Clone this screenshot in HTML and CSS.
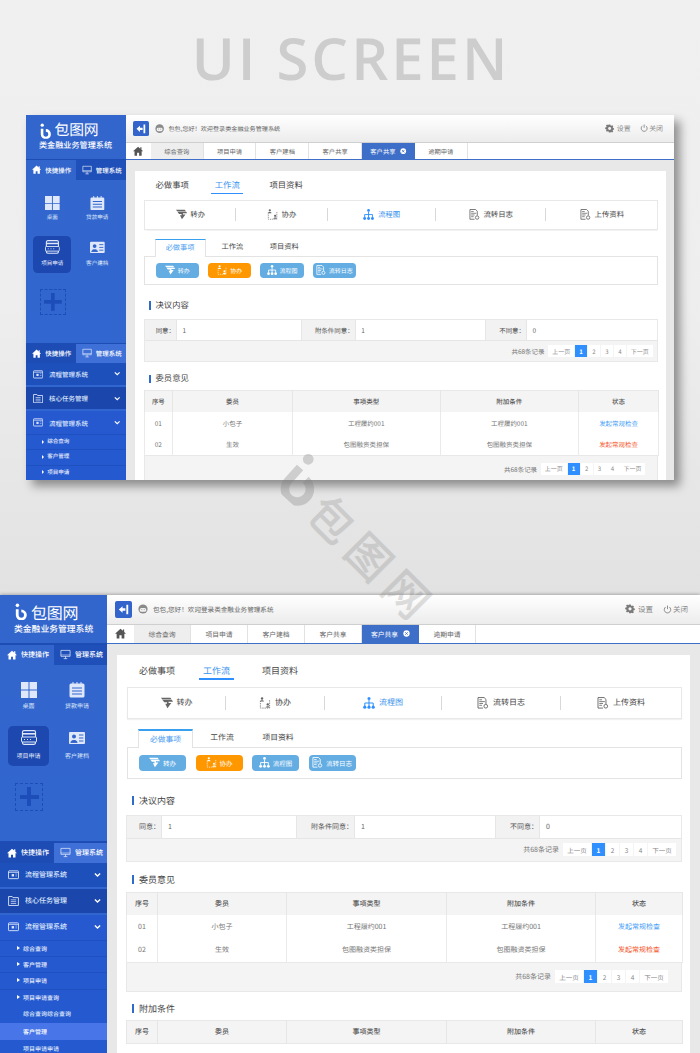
FILE: index.html
```html
<!DOCTYPE html>
<html lang="zh-CN">
<head>
<meta charset="utf-8">
<title>UI SCREEN</title>
<link rel="stylesheet" href="styles.css">
</head>
<body>
<svg class="sprite" aria-hidden="true">
  <symbol id="i-logo" viewBox="0 0 14 18"><circle cx="2.6" cy="2.4" r="1.9" fill="currentColor"/><path d="M2.4 6.5v6.3a4.4 4.4 0 1 0 4.4-4.4" fill="none" stroke="currentColor" stroke-width="3"/></symbol>
  <symbol id="i-home" viewBox="0 0 12 12"><path d="M6 .8 0 6.2h1.8V11.500h3V8h2.400v3.500h3V6.200H12L10 4.400V1.500H8.600v1.600z" fill="currentColor"/></symbol>
  <symbol id="i-monitor" viewBox="0 0 12 12"><path d="M1 1.500h10v6.500H1zM4 10.500h4M6 8v2.500" fill="none" stroke="currentColor" stroke-width=".8"/><path d="M1 6.500h10" stroke="currentColor" stroke-width=".6"/></symbol>
  <symbol id="i-grid" viewBox="0 0 16 16"><path d="M0 0h7.500v7.500H0zM8.500 0H16v7.500H8.500zM0 8.500h7.500V16H0zM8.500 8.500H16V16H8.500z" fill="currentColor"/></symbol>
  <symbol id="i-note" viewBox="0 0 16 16"><path d="M2 1.500h12a1.500 1.500 0 0 1 1.500 1.500v11a1.500 1.500 0 0 1-1.500 1.500H2A1.500 1.500 0 0 1 .5 14V3A1.500 1.500 0 0 1 2 1.500z" fill="currentColor"/><path d="M4 0v3M8 0v3M12 0v3" stroke="currentColor" stroke-width="1"/><path d="M3 6h10M3 9h10M3 12h10" stroke="#3264cb" stroke-width="1.100"/></symbol>
  <symbol id="i-app" viewBox="0 0 16 16"><rect x="1.500" y=".7" width="13" height="13.600" rx="1.500" fill="none" stroke="currentColor" stroke-width="1.200"/><path d="M1.500 3.800h13" stroke="currentColor" stroke-width="1.600"/><rect x=".5" y="7" width="15" height="5" rx="1" fill="#1c48b0" stroke="currentColor"/><path d="M3 9.500h1M6 9.500h1M9 9.500h1" stroke="currentColor"/></symbol>
  <symbol id="i-card" viewBox="0 0 16 12"><rect width="16" height="12" rx="1" fill="currentColor"/><circle cx="5" cy="4.600" r="2" fill="#3264cb"/><path d="M1.800 10.400c.3-2.600 6-2.600 6.400 0zM10 3h4.400M10 6h4.400M10 9h4.400" fill="#3264cb" stroke="#3264cb"/></symbol>
  <symbol id="i-screen" viewBox="0 0 12 10"><rect x=".5" y=".5" width="11" height="8.500" rx=".8" fill="none" stroke="currentColor"/><path d="M.5 2.200h11" stroke="currentColor" stroke-width=".8"/><rect x="4" y="4" width="2.600" height="2.600" fill="currentColor"/><path d="M8 4h2M8 6h2" stroke="currentColor" stroke-width=".6"/></symbol>
  <symbol id="i-folder" viewBox="0 0 12 11"><path d="M.6.6h4l.8 1.200h6v8.600H.6z" fill="none" stroke="currentColor"/><path d="M3 4.200h6M3 6.200h6M3 8.200h6" stroke="currentColor" stroke-width=".8"/></symbol>
  <symbol id="i-chev" viewBox="0 0 8 6"><path d="M1 1.200 4 4.200 7 1.200" fill="none" stroke="currentColor" stroke-width="1.500"/></symbol>
  <symbol id="i-toggle" viewBox="0 0 18 18"><path d="M13 4v10" stroke="currentColor" stroke-width="2"/><path d="M4 9 8 5.500v2.200h3v2.600H8v2.200z" fill="currentColor"/></symbol>
  <symbol id="i-avatar" viewBox="0 0 10 10"><circle cx="5" cy="5" r="4.600" fill="#8a8a8a"/><rect x="1.800" y="4" width="6.400" height="3.800" rx="1.600" fill="#f2f2f2"/><path d="M3.400 5.600h.8M5.800 5.600h.8" stroke="#777" stroke-width=".8"/></symbol>
  <symbol id="i-gear" viewBox="0 0 10 10"><path d="M4 0h2l.3 1.400 1.100.5L8.600 1.100 10 2.500l-.8 1.200.4 1 1.400.3v2l-1.400.3-.5 1.100.8 1.200-1.400 1.400-1.200-.8-1 .4L6 11H4l-.3-1.400-1.100-.4-1.200.8L0 8.600l.8-1.200-.4-1L-1 6V4l1.400-.3.5-1.100L.1 1.400 1.500 0l1.200.8 1-.4z" transform="translate(1 .5) scale(.8)" fill="#7a7a7a"/><circle cx="5" cy="4.800" r="1.600" fill="#f4f4f4"/></symbol>
  <symbol id="i-power" viewBox="0 0 10 10"><path d="M3 2.200a3.600 3.600 0 1 0 4 0" fill="none" stroke="#777" stroke-width=".9"/><path d="M5 .6v4" stroke="#777" stroke-width=".9"/></symbol>
  <symbol id="i-close" viewBox="0 0 8 8"><circle cx="4" cy="4" r="3.600" fill="#fff"/><path d="M2.600 2.600l2.800 2.800M5.400 2.600 2.600 5.400" stroke="#3e6fc8" stroke-width="1"/></symbol>
  <symbol id="i-transfer" viewBox="0 0 14 12"><path d="M0 0h11l1.500 1.800H1.500zM1.800 2.600h11L14 4.400H8.800V6H12L7.500 12 5 7H7V5.200H3.800z" fill="currentColor"/></symbol>
  <symbol id="i-assist" viewBox="0 0 12 13"><path d="M1 4v8h10V3" fill="none" stroke="currentColor" stroke-dasharray="1.500 1" stroke-width=".8"/><circle cx="2.800" cy="1.600" r="1.300" fill="currentColor"/><path d="M.8 5c0-2 4-2 4 0z" fill="currentColor"/><circle cx="9" cy="8" r="1.300" fill="currentColor"/><path d="M7 11.500c0-2 4-2 4 0z" fill="currentColor"/></symbol>
  <symbol id="i-flow" viewBox="0 0 12 12"><circle cx="6" cy="1.600" r="1.500" fill="currentColor"/><path d="M6 3v3M1.800 9V6h8.400v3M6 6v3" fill="none" stroke="currentColor"/><circle cx="1.800" cy="10.200" r="1.600" fill="currentColor"/><circle cx="6" cy="10.200" r="1.600" fill="currentColor"/><circle cx="10.200" cy="10.200" r="1.600" fill="currentColor"/></symbol>
  <symbol id="i-log" viewBox="0 0 12 13"><path d="M.6.6h6.600l2 2v5M6 12H.6V.6" fill="none" stroke="currentColor"/><path d="M2 3h3M2 5h6M2 7h4M2 9h3" stroke="currentColor" stroke-width=".9"/><circle cx="9" cy="10" r="2" fill="none" stroke="currentColor"/></symbol>
</svg>

<main class="canvas">
  <h1 class="hero">UI SCREEN</h1>

  <section class="window window-small">
    <aside class="side">
      <div class="brand">
        <div class="brand-top"><svg class="brand-logo"><use href="#i-logo"/></svg><span class="brand-name">包图网</span></div>
        <div class="brand-sub">类金融业务管理系统</div>
      </div>
      <div class="side-tabs">
        <div class="side-tab on-top"><svg class="ico-home"><use href="#i-home"/></svg>快捷操作</div>
        <div class="side-tab off-top"><svg class="ico-mon"><use href="#i-monitor"/></svg>管理系统</div>
      </div>
      <div class="apps">
        <div class="app"><svg class="app-ico"><use href="#i-grid"/></svg><span>桌面</span></div>
        <div class="app"><svg class="app-ico"><use href="#i-note"/></svg><span>贷款申请</span></div>
        <div class="app app-on"><svg class="app-ico"><use href="#i-app"/></svg><span>项目申请</span></div>
        <div class="app app-low"><svg class="app-ico"><use href="#i-card"/></svg><span>客户建档</span></div>
        <div class="app-add"><span class="plus"></span></div>
      </div>
      <div class="side-tabs">
        <div class="side-tab on-low"><svg class="ico-home"><use href="#i-home"/></svg>快捷操作</div>
        <div class="side-tab off-low"><svg class="ico-mon"><use href="#i-monitor"/></svg>管理系统</div>
      </div>
      <div class="menu m-dark"><svg class="m-ico"><use href="#i-screen"/></svg><span class="m-text">流程管理系统</span><svg class="chev"><use href="#i-chev"/></svg></div>
      <div class="menu m-darker"><svg class="m-ico"><use href="#i-folder"/></svg><span class="m-text">核心任务管理</span><svg class="chev"><use href="#i-chev"/></svg></div>
      <div class="menu m-open"><svg class="m-ico"><use href="#i-screen"/></svg><span class="m-text">流程管理系统</span><svg class="chev"><use href="#i-chev"/></svg></div>
      <div class="sub">综合查询</div>
      <div class="sub">客户管理</div>
      <div class="sub">项目申请</div>
    </aside>
    <div class="main">
      <header class="top">
        <span class="toggle"><svg class="toggle-ico"><use href="#i-toggle"/></svg></span>
        <svg class="avatar"><use href="#i-avatar"/></svg>
        <span class="greet">包包,您好！欢迎登录类金融业务管理系统</span>
        <span class="top-link"><svg class="gear"><use href="#i-gear"/></svg>设置</span>
        <span class="top-link"><svg class="power"><use href="#i-power"/></svg>关闭</span>
      </header>
      <nav class="nav">
        <span class="nav-home"><svg class="nav-home-ico"><use href="#i-home"/></svg></span>
        <span class="nav-tab nav-grey">综合查询</span>
        <span class="nav-tab">项目申请</span>
        <span class="nav-tab">客户建档</span>
        <span class="nav-tab">客户共享</span>
        <span class="nav-tab nav-on">客户共享<svg class="nav-x"><use href="#i-close"/></svg></span>
        <span class="nav-tab">逾期申请</span>
      </nav>
      <div class="body">
        <div class="card">
          <div class="tabs"><span class="tab">必做事项</span><span class="tab tab-on">工作流</span><span class="tab tab-last">项目资料</span></div>
          <div class="tools">
            <div class="tool"><svg class="tool-ico"><use href="#i-transfer"/></svg>转办</div>
            <div class="tool"><svg class="tool-ico"><use href="#i-assist"/></svg>协办</div>
            <div class="tool tool-on"><svg class="tool-ico"><use href="#i-flow"/></svg>流程图</div>
            <div class="tool"><svg class="tool-ico"><use href="#i-log"/></svg>流转日志</div>
            <div class="tool"><svg class="tool-ico"><use href="#i-log"/></svg>上传资料</div>
          </div>
          <div class="subtabs"><span class="subtab subtab-on">必做事项</span><span class="subtab">工作流</span><span class="subtab">项目资料</span></div>
          <div class="btn-panel">
            <span class="btn"><svg class="btn-ico"><use href="#i-transfer"/></svg>转办</span>
            <span class="btn btn-orange"><svg class="btn-ico"><use href="#i-assist"/></svg>协办</span>
            <span class="btn"><svg class="btn-ico"><use href="#i-flow"/></svg>流程图</span>
            <span class="btn"><svg class="btn-ico"><use href="#i-log"/></svg>流转日志</span>
          </div>
          <h2 class="heading heading-first">决议内容</h2>
          <div class="form">
            <div class="f-row">
              <span class="f-label">同意：</span><span class="f-value">1</span>
              <span class="f-label">附条件同意：</span><span class="f-value">1</span>
              <span class="f-label">不同意：</span><span class="f-value f-gap">0</span>
            </div>
            <div class="pager pager-near"><span class="total">共68条记录</span><span class="pg wide">上一页</span><span class="pg pg-on">1</span><span class="pg">2</span><span class="pg">3</span><span class="pg">4</span><span class="pg wide">下一页</span></div>
          </div>
          <h2 class="heading">委员意见</h2>
          <table class="grid">
            <thead><tr><th class="c1">序号</th><th class="c2">委员</th><th class="c3">事项类型</th><th class="c4">附加条件</th><th class="c5">状态</th></tr></thead>
            <tbody>
              <tr><td>01</td><td>小包子</td><td>工程履约001</td><td>工程履约001</td><td class="st-blue">发起常规检查</td></tr>
              <tr><td>02</td><td>生效</td><td>包图融资类担保</td><td>包图融资类担保</td><td class="st-red">发起常规检查</td></tr>
            </tbody>
          </table>
          <div class="pager pager-far"><span class="total">共68条记录</span><span class="pg wide">上一页</span><span class="pg pg-on">1</span><span class="pg">2</span><span class="pg">3</span><span class="pg">4</span><span class="pg wide">下一页</span></div>
        </div>
      </div>
    </div>
  </section>

  <section class="window window-large">
    <aside class="side">
      <div class="brand">
        <div class="brand-top"><svg class="brand-logo"><use href="#i-logo"/></svg><span class="brand-name">包图网</span></div>
        <div class="brand-sub">类金融业务管理系统</div>
      </div>
      <div class="side-tabs">
        <div class="side-tab on-top"><svg class="ico-home"><use href="#i-home"/></svg>快捷操作</div>
        <div class="side-tab off-top"><svg class="ico-mon"><use href="#i-monitor"/></svg>管理系统</div>
      </div>
      <div class="apps">
        <div class="app"><svg class="app-ico"><use href="#i-grid"/></svg><span>桌面</span></div>
        <div class="app"><svg class="app-ico"><use href="#i-note"/></svg><span>贷款申请</span></div>
        <div class="app app-on"><svg class="app-ico"><use href="#i-app"/></svg><span>项目申请</span></div>
        <div class="app app-low"><svg class="app-ico"><use href="#i-card"/></svg><span>客户建档</span></div>
        <div class="app-add"><span class="plus"></span></div>
      </div>
      <div class="side-tabs">
        <div class="side-tab on-low"><svg class="ico-home"><use href="#i-home"/></svg>快捷操作</div>
        <div class="side-tab off-low"><svg class="ico-mon"><use href="#i-monitor"/></svg>管理系统</div>
      </div>
      <div class="menu m-dark"><svg class="m-ico"><use href="#i-screen"/></svg><span class="m-text">流程管理系统</span><svg class="chev"><use href="#i-chev"/></svg></div>
      <div class="menu m-darker"><svg class="m-ico"><use href="#i-folder"/></svg><span class="m-text">核心任务管理</span><svg class="chev"><use href="#i-chev"/></svg></div>
      <div class="menu m-open"><svg class="m-ico"><use href="#i-screen"/></svg><span class="m-text">流程管理系统</span><svg class="chev"><use href="#i-chev"/></svg></div>
      <div class="sub">综合查询</div>
      <div class="sub">客户管理</div>
      <div class="sub">项目申请</div>
      <div class="sub">项目申请查询</div>
      <div class="leaf">综合查询综合查询</div>
      <div class="leaf leaf-on">客户管理</div>
      <div class="leaf">项目申请申请</div>
    </aside>
    <div class="main">
      <header class="top">
        <span class="toggle"><svg class="toggle-ico"><use href="#i-toggle"/></svg></span>
        <svg class="avatar"><use href="#i-avatar"/></svg>
        <span class="greet">包包,您好！欢迎登录类金融业务管理系统</span>
        <span class="top-link"><svg class="gear"><use href="#i-gear"/></svg>设置</span>
        <span class="top-link"><svg class="power"><use href="#i-power"/></svg>关闭</span>
      </header>
      <nav class="nav">
        <span class="nav-home"><svg class="nav-home-ico"><use href="#i-home"/></svg></span>
        <span class="nav-tab nav-grey">综合查询</span>
        <span class="nav-tab">项目申请</span>
        <span class="nav-tab">客户建档</span>
        <span class="nav-tab">客户共享</span>
        <span class="nav-tab nav-on">客户共享<svg class="nav-x"><use href="#i-close"/></svg></span>
        <span class="nav-tab">逾期申请</span>
      </nav>
      <div class="body">
        <div class="card">
          <div class="tabs"><span class="tab">必做事项</span><span class="tab tab-on">工作流</span><span class="tab tab-last">项目资料</span></div>
          <div class="tools">
            <div class="tool"><svg class="tool-ico"><use href="#i-transfer"/></svg>转办</div>
            <div class="tool"><svg class="tool-ico"><use href="#i-assist"/></svg>协办</div>
            <div class="tool tool-on"><svg class="tool-ico"><use href="#i-flow"/></svg>流程图</div>
            <div class="tool"><svg class="tool-ico"><use href="#i-log"/></svg>流转日志</div>
            <div class="tool"><svg class="tool-ico"><use href="#i-log"/></svg>上传资料</div>
          </div>
          <div class="subtabs"><span class="subtab subtab-on">必做事项</span><span class="subtab">工作流</span><span class="subtab">项目资料</span></div>
          <div class="btn-panel">
            <span class="btn"><svg class="btn-ico"><use href="#i-transfer"/></svg>转办</span>
            <span class="btn btn-orange"><svg class="btn-ico"><use href="#i-assist"/></svg>协办</span>
            <span class="btn"><svg class="btn-ico"><use href="#i-flow"/></svg>流程图</span>
            <span class="btn"><svg class="btn-ico"><use href="#i-log"/></svg>流转日志</span>
          </div>
          <h2 class="heading heading-first">决议内容</h2>
          <div class="form">
            <div class="f-row">
              <span class="f-label">同意：</span><span class="f-value">1</span>
              <span class="f-label">附条件同意：</span><span class="f-value">1</span>
              <span class="f-label">不同意：</span><span class="f-value f-gap">0</span>
            </div>
            <div class="pager pager-near"><span class="total">共68条记录</span><span class="pg wide">上一页</span><span class="pg pg-on">1</span><span class="pg">2</span><span class="pg">3</span><span class="pg">4</span><span class="pg wide">下一页</span></div>
          </div>
          <h2 class="heading">委员意见</h2>
          <table class="grid">
            <thead><tr><th class="c1">序号</th><th class="c2">委员</th><th class="c3">事项类型</th><th class="c4">附加条件</th><th class="c5">状态</th></tr></thead>
            <tbody>
              <tr><td>01</td><td>小包子</td><td>工程履约001</td><td>工程履约001</td><td class="st-blue">发起常规检查</td></tr>
              <tr><td>02</td><td>生效</td><td>包图融资类担保</td><td>包图融资类担保</td><td class="st-red">发起常规检查</td></tr>
            </tbody>
          </table>
          <div class="pager pager-far"><span class="total">共68条记录</span><span class="pg wide">上一页</span><span class="pg pg-on">1</span><span class="pg">2</span><span class="pg">3</span><span class="pg">4</span><span class="pg wide">下一页</span></div>
          <h2 class="heading heading-last">附加条件</h2>
          <table class="grid">
            <thead><tr><th class="c1">序号</th><th class="c2">委员</th><th class="c3">事项类型</th><th class="c4">附加条件</th><th class="c5">状态</th></tr></thead>
          </table>
        </div>
      </div>
    </div>
  </section>

  <div class="watermark">
    <svg class="wm-logo"><use href="#i-logo"/></svg>
    <span class="wm-text">包图网</span>
  </div>
</main>
</body>
</html>
```

FILE: styles.css
```css
* { box-sizing: border-box; }
html, body { margin: 0; padding: 0; }
body {
  width: 700px;
  height: 1053px;
  overflow: hidden;
  font-family: "Noto Sans CJK SC", "Noto Sans", sans-serif;
  text-rendering: geometricPrecision;
  background: linear-gradient(#f0f0f0 0, #eeeeee 300px, #e2e2e2 590px);
  color: #555;
}
.sprite { display: none; }
svg { display: block; flex: none; }

.canvas { position: relative; height: 1053px; overflow: hidden; }

.hero {
  margin: 0;
  height: 115px;
  padding: 18px 0 0 2px;
  text-align: center;
  font-family: "Open Sans", sans-serif;
  font-weight: 600;
  font-size: 58px;
  line-height: 79px;
  letter-spacing: 3px;
  color: #cdcdcd;
}

/* windows: the same component at two scales */
.window {
  display: flex;
  width: 700px;
  overflow: hidden;
  background: #e8e8e8;
}
.window-small {
  zoom: 0.926;
  height: 394px;
  margin-left: 28px;
  box-shadow: 7px 7px 10px rgba(0, 0, 0, .4);
}
.window-small .side { width: 108px; }
.window-small .body { padding-right: 9px; }
.window-large {
  height: 458px;
  margin-top: 115px;
  box-shadow: 0 -1px 3px rgba(0, 0, 0, .25);
}

/* sidebar */
.side {
  width: 107px;
  flex: none;
  display: flex;
  flex-direction: column;
  background: linear-gradient(#3366cc, #3066d2);
  color: #fff;
}
.brand { height: 48px; flex: none; padding: 8px 0 0 14px; }
.brand-top { display: flex; align-items: center; gap: 3px; height: 18px; padding-left: 1px; }
.brand-logo { width: 13px; height: 17px; color: #fff; }
.brand-name { font-size: 16px; line-height: 18px; letter-spacing: -.2px; }
.brand-sub { margin-top: 1px; font-size: 8.800px; line-height: 14px; font-weight: 500; white-space: nowrap; }

.side-tabs { display: flex; height: 22px; flex: none; }
.side-tab { flex: 1; display: flex; align-items: center; font-size: 7px; font-weight: 500; white-space: nowrap; border-top: 2px solid #1d4cb5; }
.on-top { padding-left: 7px; background: #3366cc; }
.off-top { padding-left: 6px; background: #1f4fb8; }
.on-low { padding-left: 7px; background: #1d4cb5; }
.off-low { padding-left: 6px; background: #3f70d8; }
.ico-home { width: 10px; height: 10px; margin-right: 4px; color: #fff; }
.ico-mon { width: 11px; height: 11px; margin-right: 4px; color: #e3ebfb; }

.apps {
  height: 176px;
  flex: none;
  padding: 13px 0 0 8px;
  display: grid;
  grid-template-columns: 41px 56px;
  grid-auto-rows: 40px;
  row-gap: 8px;
  align-content: start;
}
.app { display: flex; flex-direction: column; align-items: center; padding-top: 4px; font-size: 6px; line-height: 8px; color: #dfe8fa; white-space: nowrap; }
.app-ico { width: 16px; height: 16px; margin-bottom: 4px; color: #dfe8fa; }
.app-on { background: #1c48b0; border-radius: 5px; color: #e8eefb; }
.app-on .app-ico { margin-bottom: 6px; }
.app-low .app-ico { margin-bottom: 6px; }
.app-add {
  grid-column: 1 / -1;
  margin: 9px 0 0 7px;
  width: 28px;
  height: 28px;
  border: 1px dashed #1c4db8;
  display: flex;
  align-items: center;
  justify-content: center;
}
.plus {
  width: 19px;
  height: 19px;
  background:
    linear-gradient(#1c4db8, #1c4db8) center / 100% 4px no-repeat,
    linear-gradient(#1c4db8, #1c4db8) center / 4px 100% no-repeat;
}

.menu { display: flex; align-items: center; padding: 0 6px 0 8px; flex: none; font-size: 7px; font-weight: 500; color: #dce6fb; }
.m-dark { height: 24px; background: #1e50bb; margin-bottom: 2px; }
.m-darker { height: 24px; background: #1b46ab; margin-bottom: 2px; }
.m-open { height: 25px; background: #2659d0; }
.m-ico { width: 11px; height: 10px; margin-right: 6px; color: #dce6fb; }
.m-text { flex: 1; white-space: nowrap; }
.chev { width: 7px; height: 6px; color: #fff; }
.sub {
  height: 16.300px;
  flex: none;
  padding-left: 23px;
  position: relative;
  font-size: 6px;
  font-weight: 500;
  line-height: 15px;
  color: #e4ebfb;
  background: #2459cf;
  border-top: 1px solid #1f50bf;
}
.sub::before {
  content: "";
  position: absolute;
  left: 17px;
  top: 5px;
  border-left: 3px solid #fff;
  border-top: 2.500px solid transparent;
  border-bottom: 2.500px solid transparent;
}
.leaf { height: 17.500px; flex: none; padding-left: 23px; font-size: 6px; font-weight: 500; line-height: 18px; color: #dfe8fa; background: #2459cf; }
.leaf-on { background: #4876e8; color: #fff; }

/* header */
.main { flex: 1; min-width: 0; display: flex; flex-direction: column; }
.top {
  height: 30px;
  flex: none;
  display: flex;
  align-items: center;
  padding: 0 12px 0 8px;
  background: linear-gradient(#ffffff, #ececec);
  border-bottom: 1px solid #cfcfcf;
  font-size: 6.600px;
  color: #666;
}
.toggle { width: 17px; height: 17px; border-radius: 2px; background: #3264cb; color: #fff; flex: none; }
.toggle-ico { width: 17px; height: 17px; }
.avatar { width: 10px; height: 10px; margin-left: 6px; }
.greet { flex: 1; margin-left: 5px; white-space: nowrap; }
.top-link { display: flex; align-items: center; font-size: 7.500px; color: #888; white-space: nowrap; }
.top-link + .top-link { margin-left: 10px; }
.gear { width: 10px; height: 10px; margin-right: 3px; }
.power { width: 9px; height: 9px; margin-right: 1px; }

.nav { height: 19px; flex: none; display: flex; background: #fff; border-bottom: 1.500px solid #3e6fc8; }
.nav-home { width: 27px; display: flex; align-items: center; justify-content: center; color: #555; }
.nav-home-ico { width: 11px; height: 11px; }
.nav-tab { width: 57px; display: flex; align-items: center; justify-content: center; font-size: 6.800px; color: #666; border-right: 1px solid #e2e2e2; white-space: nowrap; }
.nav-grey { background: #eeeeee; }
.nav-on { background: #3e6fc8; color: #fff; border-right: 0; }
.nav-x { width: 7px; height: 7px; margin-left: 5px; }

/* content */
.body { flex: 1; min-height: 0; padding: 11px 10px 0; }
.card { height: 100%; padding: 10px 8px 0 9px; background: #fff; }
.tabs { display: flex; gap: 20px; margin-left: 9px; height: 15px; margin-bottom: 7px; }
.tab { padding: 0 4px 1px; height: 15px; font-size: 9px; line-height: 12px; color: #444; }
.tab-on { color: #3b93ee; border-bottom: 2px solid #2f8fff; }
.tab-last { margin-left: 4px; }

.tools {
  margin-left: 1px;
  height: 32px;
  display: grid;
  grid-template-columns: 97px 99px 117px 119px 1fr;
  align-items: center;
  border: 1px solid #e8e8e8;
  box-shadow: 0 1px 1px rgba(0, 0, 0, .05);
  font-size: 8px;
  color: #444;
}
.tool { height: 14px; display: flex; align-items: center; justify-content: center; gap: 4px; border-left: 1px solid #d8d8d8; white-space: nowrap; }
.tool:first-child { border-left: 0; }
.tool-on { color: #3b93ee; }
.tool-ico { width: 12px; height: 12px; color: #666; }
.tool-on .tool-ico { color: #2f8fff; }

.subtabs { display: flex; margin: 10px 0 -1px 12px; height: 19px; font-size: 7.800px; color: #444; position: relative; }
.subtab { width: 55px; text-align: center; line-height: 18px; }
.subtab + .subtab { margin-left: 10px; width: 38px; }
.subtab-on { color: #4a9cf0; background: #fff; border-top: 2px solid #39a0ef; border-left: 1px solid #e3e3e3; border-right: 1px solid #e3e3e3; }
.subtab:last-child { margin-left: 18px; }

.btn-panel { margin-left: 1px; height: 32px; display: flex; align-items: center; gap: 9.500px; padding-left: 11px; border: 1px solid #e3e3e3; }
.btn { width: 47px; height: 16px; display: flex; align-items: center; justify-content: center; gap: 3px; border-radius: 4px; background: #63ade3; color: #fff; font-size: 6.500px; white-space: nowrap; }
.btn-orange { background: #ff9800; }
.btn-ico { width: 11px; height: 11px; color: #fff; }

.heading { margin: 12px 0 6px 6px; height: 12px; padding-left: 7px; font-size: 9px; line-height: 12px; font-weight: 400; color: #444; position: relative; }
.heading::before { content: ""; position: absolute; left: 0; top: 1.500px; width: 2px; height: 9px; background: #2f6bc9; }
.heading-first { margin-top: 16px; margin-bottom: 8px; }
.heading-last { margin-top: 11px; margin-bottom: 5px; }

.form { border: 1px solid #e8e8e8; background: #f4f4f4; }
.f-row { height: 23px; display: grid; grid-template-columns: 34px 136px 57px 142px 43px 1fr; border-bottom: 1px solid #e6e6e6; font-size: 7px; align-items: stretch; }
.f-label { display: flex; align-items: center; justify-content: flex-end; background: #f2f2f2; color: #555; white-space: nowrap; padding-right: 1px; }
.f-value { display: flex; align-items: center; padding-left: 6px; background: #fff; color: #666; border-left: 1px solid #e6e6e6; border-right: 1px solid #e6e6e6; }
.f-gap { border-right: 0; }

.pager { display: flex; align-items: center; justify-content: flex-end; gap: 1px; background: #f4f4f4; font-size: 7px; color: #777; }
.pager-near { height: 22px; padding-right: 5px; }
.pager-far { height: 29px; padding-right: 13px; border: 1px solid #e8e8e8; border-top: 0; }
.total { margin-right: 3px; white-space: nowrap; }
.pg { width: 13px; height: 13px; display: flex; align-items: center; justify-content: center; background: #fff; color: #888; font-size: 6.500px; }
.wide { width: 28px; white-space: nowrap; }
.pg-on { background: #2f8fff; color: #fff; font-weight: 700; }

.grid { width: 100%; border-collapse: collapse; table-layout: fixed; font-size: 7px; color: #777; border: 1px solid #e8e8e8; }
.grid th { height: 23px; font-weight: 500; color: #555; background: #f4f4f4; border-left: 1px solid #e6e6e6; border-right: 1px solid #e6e6e6; padding: 0; }
.grid td { height: 23.500px; padding: 0; text-align: center; background: #fff; border-left: 1px solid #eaeaea; border-right: 1px solid #eaeaea; }
.c1 { width: 31px; }
.c2 { width: 129px; }
.c3 { width: 160px; }
.c4 { width: 149px; }
.c5 { width: 87px; }
.grid .st-blue { color: #3d9bf5; }
.grid .st-red { color: #f4511e; }

/* watermark overlay */
.watermark { position: absolute; inset: 0; pointer-events: none; }
.wm-logo { position: absolute; left: 285px; top: 456px; width: 40px; height: 51px; transform: rotate(42deg); color: #808080; opacity: .32; }
.wm-text {
  position: absolute;
  left: 296px;
  top: 528px;
  height: 54px;
  transform-origin: 75px 27px;
  transform: rotate(45deg);
  font-size: 44px;
  line-height: 54px;
  letter-spacing: 9px;
  white-space: nowrap;
  color: #808080;
  -webkit-text-stroke: 1px #808080;
  opacity: .25;
}
```
